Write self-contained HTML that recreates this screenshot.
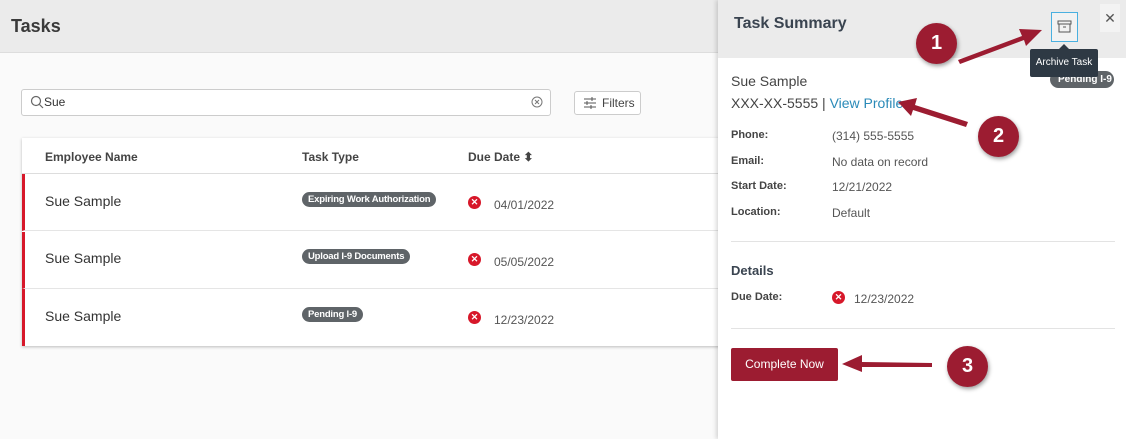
<!DOCTYPE html>
<html><head><style>
*{box-sizing:border-box;margin:0;padding:0}
body{width:1126px;height:439px;overflow:hidden;font-family:"Liberation Sans",sans-serif;background:#fafafa;position:relative;color:#333}
.a{position:absolute}
.hdr{left:0;top:0;width:1126px;height:53px;background:#ebebeb;border-bottom:1px solid #ddd}
.pill{background:#5f6468;color:#fff;font-size:9.5px;font-weight:bold;border-radius:9px;padding:2px 6px;display:inline-block;letter-spacing:-0.2px}
.x{width:13px;height:13px;border-radius:50%;background:#d7182a;color:#fff;font-size:9px;font-weight:bold;text-align:center;line-height:13px}
.row{left:22px;width:700px;height:57px;border-left:3px solid #d7182a;border-bottom:1px solid #e5e5e5;background:#fff}
.lbl{font-size:12px;font-weight:bold;color:#444}
.val{font-size:12px;color:#555}
.num{width:41px;height:41px;border-radius:50%;background:#9c1c31;color:#fff;font-weight:bold;font-size:20px;text-align:center;line-height:41px;box-shadow:1px 2px 4px rgba(0,0,0,.4)}
</style></head><body>
<div class="a hdr"></div>
<div class="a" style="left:11px;top:16px;font-size:18px;color:#333;font-weight:bold;color:#3a3a3a">Tasks</div>
<div class="a" style="left:21px;top:89px;width:530px;height:27px;background:#fff;border:1px solid #ccc;border-radius:3px"></div>
<svg class="a" style="left:30px;top:95px" width="14" height="14"><circle cx="6" cy="6" r="4.5" fill="none" stroke="#666" stroke-width="1.2"/><line x1="9.5" y1="9.5" x2="13" y2="13" stroke="#666" stroke-width="1.2"/></svg>
<div class="a" style="left:44px;top:95px;font-size:12px;color:#333">Sue</div>
<svg class="a" style="left:531px;top:96px" width="12" height="12"><circle cx="6" cy="6" r="5" fill="none" stroke="#777"/><path d="M4 4L8 8M8 4L4 8" stroke="#777"/></svg>
<div class="a" style="left:574px;top:91px;width:67px;height:24px;background:#fff;border:1px solid #ccc;border-radius:3px;font-size:12px;color:#444;padding:4px 0 0 27px">Filters</div>
<svg class="a" style="left:584px;top:97px" width="12" height="12"><path d="M0 2H12M0 6H12M0 10H12" stroke="#555"/><path d="M8 0V4M3 4V8M7 8V12" stroke="#555"/></svg>
<div class="a" style="left:22px;top:138px;width:700px;height:208px;background:#fff;box-shadow:0 1px 3px rgba(0,0,0,.25)"></div>
<div class="a" style="left:22px;top:138px;width:700px;height:36px;border-bottom:1px solid #ddd"></div>
<div class="a lbl" style="left:45px;top:150px">Employee Name</div>
<div class="a lbl" style="left:302px;top:150px">Task Type</div>
<div class="a lbl" style="left:468px;top:150px">Due Date ⬍</div>
<div class="a row" style="top:174px"></div>
<div class="a row" style="top:232px"></div>
<div class="a row" style="top:289px;height:57px;border-bottom:none"></div>
<div class="a" style="left:45px;top:193px;font-size:14px">Sue Sample</div>
<div class="a" style="left:45px;top:250px;font-size:14px">Sue Sample</div>
<div class="a" style="left:45px;top:308px;font-size:14px">Sue Sample</div>
<div class="a pill" style="left:302px;top:192px">Expiring Work Authorization</div>
<div class="a pill" style="left:302px;top:249px">Upload I-9 Documents</div>
<div class="a pill" style="left:302px;top:307px">Pending I-9</div>
<div class="a x" style="left:468px;top:196px">✕</div><div class="a val" style="left:494px;top:198px">04/01/2022</div>
<div class="a x" style="left:468px;top:253px">✕</div><div class="a val" style="left:494px;top:255px">05/05/2022</div>
<div class="a x" style="left:468px;top:311px">✕</div><div class="a val" style="left:494px;top:313px">12/23/2022</div>

<div class="a" style="left:718px;top:0;width:408px;height:439px;background:#fff;box-shadow:-2px 0 4px rgba(0,0,0,.15)"></div>
<div class="a" style="left:718px;top:0;width:408px;height:58px;background:#ebebeb"></div>
<div class="a" style="left:734px;top:15px;font-size:16px;font-weight:bold;color:#3a4450">Task Summary</div>
<div class="a" style="left:1051px;top:12px;width:27px;height:30px;border:1px solid #4ab0e0;background:#f2f2f2"></div>
<svg class="a" style="left:1057px;top:19px" width="15" height="15"><rect x="1" y="2" width="13" height="3" fill="none" stroke="#555"/><rect x="2" y="5" width="11" height="8" fill="none" stroke="#555"/><line x1="6" y1="8" x2="9" y2="8" stroke="#555"/></svg>
<div class="a" style="left:1100px;top:4px;width:20px;height:28px;background:#f3f3f3;font-size:14px;color:#555;text-align:center;line-height:28px">✕</div>
<div class="a" style="left:1050px;top:71px;width:64px;height:17px;border-radius:9px;background:#5f6468;color:#fff;font-size:10px;font-weight:bold;padding:3px 0 0 8px">Pending I-9</div>
<div class="a" style="left:1030px;top:49px;width:68px;height:28px;background:#2e3944;border-radius:2px;color:#fff;font-size:10px;text-align:center;line-height:28px">Archive Task</div>
<div class="a" style="left:1059px;top:44px;width:0;height:0;border:5px solid transparent;border-bottom-color:#2e3944;border-top:0"></div>
<div class="a" style="left:731px;top:73px;font-size:14px;color:#444">Sue Sample</div>
<div class="a" style="left:731px;top:95px;font-size:14px;color:#444">XXX-XX-5555 | <span style="color:#2a8ab8">View Profile</span></div>
<div class="a lbl" style="left:731px;top:129px;font-size:11px">Phone:</div><div class="a val" style="left:832px;top:129px">(314) 555-5555</div>
<div class="a lbl" style="left:731px;top:155px;font-size:11px">Email:</div><div class="a val" style="left:832px;top:155px">No data on record</div>
<div class="a lbl" style="left:731px;top:180px;font-size:11px">Start Date:</div><div class="a val" style="left:832px;top:180px">12/21/2022</div>
<div class="a lbl" style="left:731px;top:206px;font-size:11px">Location:</div><div class="a val" style="left:832px;top:206px">Default</div>
<div class="a" style="left:731px;top:241px;width:384px;height:1px;background:#e3e3e3"></div>
<div class="a" style="left:731px;top:263px;font-size:13px;font-weight:bold;color:#3a4450">Details</div>
<div class="a lbl" style="left:731px;top:291px;font-size:11px">Due Date:</div>
<div class="a x" style="left:832px;top:291px">✕</div><div class="a val" style="left:854px;top:292px">12/23/2022</div>
<div class="a" style="left:731px;top:328px;width:384px;height:1px;background:#e3e3e3"></div>
<div class="a" style="left:731px;top:348px;width:107px;height:33px;background:#9c1c31;border-radius:2px;color:#fff;font-size:12px;text-align:center;line-height:33px">Complete Now</div>

<svg class="a" style="left:0;top:0" width="1126" height="439">
<g fill="#9c1c31">
<path d="M958 60L1022 36L1019 29L1042 30L1026 46L1024 40L960 64Z"/>
<path d="M968 122L915 105L917 98L898 102L911 116L913 110L966 127Z"/>
<path d="M932 363L862 362L862 355L842 364L862 372L862 367L932 367Z"/>
</g></svg>
<div class="a num" style="left:916px;top:23px">1</div>
<div class="a num" style="left:978px;top:116px">2</div>
<div class="a num" style="left:947px;top:346px">3</div>
</body></html>
